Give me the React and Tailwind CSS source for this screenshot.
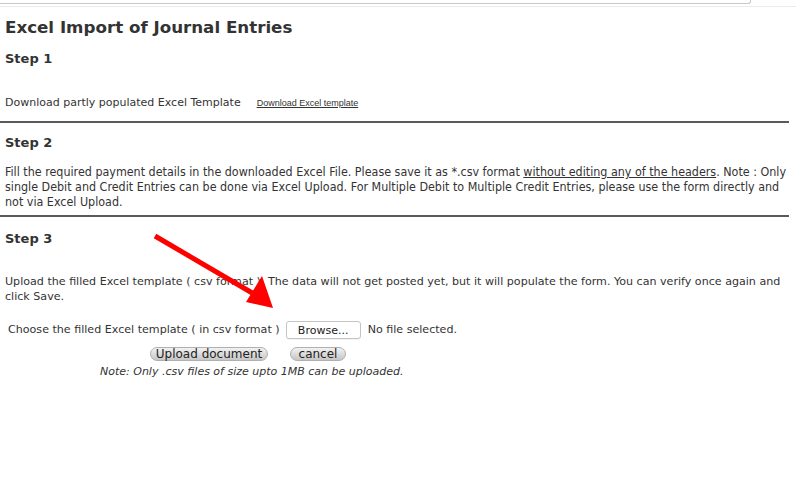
import React from 'react';

const App = () => {
  return (
    <div className="relative w-[796px] h-[497px] bg-white text-[#333] overflow-hidden font-['DejaVu_Sans',Verdana,sans-serif]">
      <div className="h-[4px] w-[751px] border-b border-r border-[#c8c8c8] rounded-br-[3px]" />
      <div className="h-[3px] border-b border-[#ebebeb]" />

      <div className="px-[5px]">
        <h1 className="mt-[9px] text-[16.7px] leading-[22px] font-bold">Excel Import of Journal Entries</h1>

        <h2 className="mt-[13px] text-[13px] leading-[16px] font-bold">Step 1</h2>
        <div className="mt-[28px] flex items-center text-[11px] leading-[16px]">
          <span>Download partly populated Excel Template</span>
          <a href="#" className="ml-[16px] text-[9px] underline font-['Liberation_Sans',sans-serif] text-[#333]">
            Download Excel template
          </a>
        </div>
      </div>

      <div className="mt-[10px] mr-[7px] h-[2px] bg-[#5a5a5a]" />

      <div className="px-[5px]">
        <h2 className="mt-[12px] text-[13px] leading-[16px] font-bold">Step 2</h2>
        <p className="mt-[13px] text-[12.4px] leading-[15px] font-['DejaVu_Sans_Condensed','DejaVu_Sans',sans-serif]">
          Fill the required payment details in the downloaded Excel File. Please save it as *.csv format{' '}
          <span className="underline">without editing any of the headers</span>. Note : Only single Debit and Credit Entries can be done via Excel Upload. For Multiple Debit to Multiple Credit Entries, please use the form directly and not via Excel Upload.
        </p>
      </div>

      <div className="mt-[6px] mr-[7px] h-[2px] bg-[#5a5a5a]" />

      <div className="px-[5px]">
        <h2 className="mt-[14px] text-[13px] leading-[16px] font-bold">Step 3</h2>
        <p className="mt-[27px] pr-[8px] text-[11.1px] leading-[15px]">
          Upload the filled Excel template ( csv format ). The data will not get posted yet, but it will populate the form. You can verify once again and click Save.
        </p>

        <div className="mt-[17px] pl-[3px] flex items-center text-[11.1px] leading-[18px]">
          <span>Choose the filled Excel template ( in csv format )</span>
          <button className="ml-[6px] h-[18px] w-[75px] rounded-[3px] border border-[#c4c4c4] bg-white text-[11px] text-[#222] shadow-[0_1px_0_rgba(0,0,0,0.05)]">
            Browse...
          </button>
          <span className="ml-[7px]">No file selected.</span>
        </div>

        <div className="mt-[8px] pl-[145px] flex items-center gap-[22px] text-[12px]">
          <button className="h-[14px] w-[118px] rounded-[7px] border border-[#b0b0b0] bg-gradient-to-b from-[#f2f2f2] to-[#c6c6c6] leading-[12px] text-[#222]">
            Upload document
          </button>
          <button className="h-[14px] w-[56px] rounded-[7px] border border-[#b0b0b0] bg-gradient-to-b from-[#f2f2f2] to-[#c6c6c6] leading-[12px] text-[#222]">
            cancel
          </button>
        </div>

        <p className="mt-[4px] pl-[95px] text-[11px] leading-[14px] italic">
          Note: Only .csv files of size upto 1MB can be uploaded.
        </p>
      </div>

      <svg className="absolute left-0 top-0 pointer-events-none" width="796" height="497">
        <line x1="155" y1="236" x2="254" y2="294" stroke="#ff0000" strokeWidth="5" />
        <polygon points="273,308 246,302 262,276" fill="#ff0000" />
      </svg>
    </div>
  );
};

export default App;
